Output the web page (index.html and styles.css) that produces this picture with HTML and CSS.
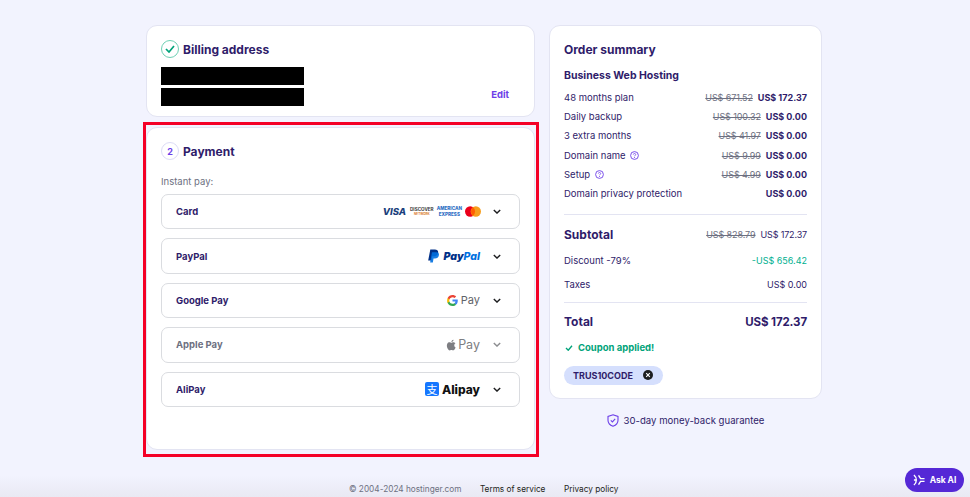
FILE: index.html
```html
<!DOCTYPE html>
<html lang="en">
<head>
  <meta charset="UTF-8">
  <title>Checkout</title>
  <link rel="stylesheet" href="styles.css">
</head>
<body>
  <div class="layout">
    <div class="left-col">
      <section class="card billing">
        <div class="step-title">
          <span class="step step-done">
            <svg width="10" height="8" viewBox="0 0 10 8"><path d="M1 4l3 3 5-6" fill="none" stroke="#00a37a" stroke-width="1.7"/></svg>
          </span>
          <h2>Billing address</h2>
        </div>
        <div class="billing-body">
          <div class="redacted-list">
            <div class="redacted"></div>
            <div class="redacted"></div>
          </div>
          <a class="edit" href="#">Edit</a>
        </div>
      </section>

      <section class="card payment">
        <div class="step-title">
          <span class="step step-num">2</span>
          <h2>Payment</h2>
        </div>
        <div class="instant">Instant pay:</div>
        <div class="methods">
          <div class="method">
            <span class="method-name">Card</span>
            <span class="logo logo-cards">
              <span class="visa">VISA</span>
              <span class="discover">DISCOVER<small>NETWORK</small></span>
              <span class="amex">AMERICAN<br>EXPRESS</span>
              <svg width="16" height="11" viewBox="0 0 17 11"><circle cx="5.5" cy="5.5" r="5.5" fill="#eb001b"/><circle cx="11.5" cy="5.5" r="5.5" fill="#f79e1b"/><path d="M8.5 1.1a5.5 5.5 0 0 1 0 8.8 5.5 5.5 0 0 1 0-8.8z" fill="#ff5f00"/></svg>
            </span>
            <svg class="chevron" width="8" height="5" viewBox="0 0 10 6"><path d="M1 1l4 4 4-4" fill="none" stroke="#1d1e20" stroke-width="1.7"/></svg>
          </div>
          <div class="method">
            <span class="method-name">PayPal</span>
            <span class="logo logo-paypal">
              <svg width="11" height="14" viewBox="0 0 12 14"><path d="M2.5 0h5c2.6 0 4 1.4 3.500 3.600C10.500 6 8.800 7.300 6.300 7.300H4.600L3.800 12H0.200z" fill="#003087"/><path d="M4.300 3h4.700c2.300 0 3.300 1.200 2.900 3.100-.5 2.300-2 3.500-4.300 3.500H6L5.300 14H2.300z" fill="#0070e0" opacity=".9"/></svg>
              <span class="pp-text"><b>Pay</b><i>Pal</i></span>
            </span>
            <svg class="chevron" width="8" height="5" viewBox="0 0 10 6"><path d="M1 1l4 4 4-4" fill="none" stroke="#1d1e20" stroke-width="1.7"/></svg>
          </div>
          <div class="method">
            <span class="method-name">Google Pay</span>
            <span class="logo logo-gpay">
              <svg width="11" height="11" viewBox="0 0 24 24"><path d="M23.500 12.300c0-.9-.1-1.600-.2-2.300H12v4.400h6.500c-.3 1.500-1.100 2.700-2.400 3.500v3h3.800c2.300-2 3.600-5 3.600-8.600z" fill="#4285f4"/><path d="M12 24c3.200 0 6-1.100 7.900-2.900l-3.800-3c-1.100.7-2.400 1.200-4.100 1.200-3.100 0-5.800-2.100-6.700-5H1.400v3.100C3.400 21.300 7.400 24 12 24z" fill="#34a853"/><path d="M5.300 14.300c-.5-1.500-.5-3.100 0-4.600V6.600H1.400c-1.600 3.200-1.600 7.600 0 10.800z" fill="#fbbc04"/><path d="M12 4.700c1.800 0 3.300.6 4.500 1.800l3.400-3.400C17.900 1.200 15.200 0 12 0 7.400 0 3.400 2.700 1.400 6.600l3.900 3.100c.9-2.900 3.600-5 6.700-5z" fill="#ea4335"/></svg>
              <span>Pay</span>
            </span>
            <svg class="chevron" width="8" height="5" viewBox="0 0 10 6"><path d="M1 1l4 4 4-4" fill="none" stroke="#1d1e20" stroke-width="1.7"/></svg>
          </div>
          <div class="method method-off">
            <span class="method-name">Apple Pay</span>
            <span class="logo logo-apay">
              <svg width="10" height="12" viewBox="0 0 17 20"><path d="M14 10.600c0-2.300 1.900-3.400 2-3.500-1.100-1.600-2.800-1.800-3.400-1.800-1.400-.1-2.800.9-3.500.9s-1.900-.9-3-.8C4.500 5.400 3 6.300 2.200 7.700.6 10.500 1.800 14.600 3.300 16.900c.8 1.100 1.700 2.300 2.900 2.300 1.200-.1 1.600-.8 3-.8s1.800.8 3 .7c1.300 0 2-1.100 2.800-2.200.9-1.300 1.200-2.500 1.300-2.600-.1 0-2.300-.9-2.300-3.700zM11.800 3.800C12.400 3 12.900 2 12.700.9c-.9 0-2 .6-2.600 1.400-.6.700-1.100 1.700-1 2.700 1 .1 2-.5 2.700-1.200z" fill="#7d7e82"/></svg>
              <span>Pay</span>
            </span>
            <svg class="chevron" width="8" height="5" viewBox="0 0 10 6"><path d="M1 1l4 4 4-4" fill="none" stroke="#8c8d90" stroke-width="1.7"/></svg>
          </div>
          <div class="method">
            <span class="method-name">AliPay</span>
            <span class="logo logo-alipay">
              <span class="ali-mark">支</span>
              <span>Alipay</span>
            </span>
            <svg class="chevron" width="8" height="5" viewBox="0 0 10 6"><path d="M1 1l4 4 4-4" fill="none" stroke="#1d1e20" stroke-width="1.7"/></svg>
          </div>
        </div>
      </section>
    </div>

    <div class="right-col">
      <aside class="card summary">
        <h2>Order summary</h2>
        <h3>Business Web Hosting</h3>
        <div class="lines">
          <div class="line"><span>48 months plan</span><span class="prices"><s>US$ 671.52</s><b>US$ 172.37</b></span></div>
          <div class="line"><span>Daily backup</span><span class="prices"><s>US$ 100.32</s><b>US$ 0.00</b></span></div>
          <div class="line"><span>3 extra months</span><span class="prices"><s>US$ 41.97</s><b>US$ 0.00</b></span></div>
          <div class="line"><span class="with-help">Domain name <svg width="9" height="9" viewBox="0 0 9 9"><circle cx="4.500" cy="4.500" r="3.900" fill="none" stroke="#6d3fe8" stroke-width=".9"/><path d="M3.300 3.600c0-1.500 2.400-1.500 2.400 0 0 .9-1.200.8-1.200 1.700" fill="none" stroke="#6d3fe8" stroke-width=".8"/><circle cx="4.500" cy="6.600" r=".5" fill="#6d3fe8"/></svg></span><span class="prices"><s>US$ 9.99</s><b>US$ 0.00</b></span></div>
          <div class="line"><span class="with-help">Setup <svg width="9" height="9" viewBox="0 0 9 9"><circle cx="4.500" cy="4.500" r="3.900" fill="none" stroke="#6d3fe8" stroke-width=".9"/><path d="M3.300 3.600c0-1.500 2.400-1.500 2.400 0 0 .9-1.200.8-1.200 1.700" fill="none" stroke="#6d3fe8" stroke-width=".8"/><circle cx="4.500" cy="6.600" r=".5" fill="#6d3fe8"/></svg></span><span class="prices"><s>US$ 4.99</s><b>US$ 0.00</b></span></div>
          <div class="line"><span>Domain privacy protection</span><span class="prices"><b>US$ 0.00</b></span></div>
        </div>
        <hr>
        <div class="subtotal">
          <strong>Subtotal</strong>
          <span class="prices"><s>US$ 828.79</s><span>US$ 172.37</span></span>
        </div>
        <div class="line discount"><span>Discount -79%</span><span class="green">-US$ 656.42</span></div>
        <div class="line taxes"><span>Taxes</span><span class="tax-value">US$ 0.00</span></div>
        <hr class="hr-total">
        <div class="total"><strong>Total</strong><strong class="total-value">US$ 172.37</strong></div>
        <div class="coupon">
          <svg width="8" height="6" viewBox="0 0 10 8"><path d="M1 4l3 3 5-6" fill="none" stroke="#00a37a" stroke-width="1.800"/></svg>
          Coupon applied!
        </div>
        <div class="chip">
          <span>TRUS10CODE</span>
          <svg width="10" height="10" viewBox="0 0 10 10"><circle cx="5" cy="5" r="5" fill="#1d1e20"/><path d="M3.200 3.200l3.600 3.600M6.800 3.200l-3.600 3.600" stroke="#fff" stroke-width="1.100"/></svg>
        </div>
      </aside>
      <div class="guarantee">
        <svg width="12" height="13" viewBox="0 0 12 13"><path d="M6 .8l5 1.700v3.700c0 3-2.200 5-5 6-2.800-1-5-3-5-6V2.500z" fill="none" stroke="#6d3fe8" stroke-width="1.100"/><path d="M3.800 6.300l1.600 1.600 2.800-3" fill="none" stroke="#6d3fe8" stroke-width="1.100"/></svg>
        30-day money-back guarantee
      </div>
    </div>
  </div>

  <footer class="footer">
    <span class="copyright">© 2004-2024 hostinger.com</span>
    <a href="#">Terms of service</a>
    <a href="#">Privacy policy</a>
  </footer>

  <div class="red-frame"></div>

  <button class="ask-ai">
    <svg width="12" height="12" viewBox="0 0 13 13"><path d="M1 1c1.800 1.500 2.600 3.300 2.600 5.500S2.800 10.500 1 12M6 1.500l2.200 3.500H12.500M6 11.500l2.200-3.500H12.500M1 6.500h2.500" fill="none" stroke="#fff" stroke-width="1.500"/></svg>
    Ask AI
  </button>
</body>
</html>
```

FILE: styles.css
```css
/* Page */
body {
  margin: 0;
  height: 497px;
  overflow: hidden;
  position: relative;
  background-color: #f2f3fe;
  font-family: 'Inter', 'Liberation Sans', sans-serif;
  font-size: 9.5px;
  color: #2f1c6a;
}

.layout {
  display: flex;
  gap: 14px;
  padding: 25px 0 0 146px;
}

.left-col {
  width: 389px;
  display: flex;
  flex-direction: column;
  gap: 10px;
}

.right-col {
  width: 273px;
}

.card {
  background-color: #ffffff;
  border: 1px solid #e3e4f2;
  border-radius: 11px;
  box-sizing: border-box;
}

h2 {
  margin: 0 0 -1px;
  padding-top: 1px;
  font-size: 12px;
  line-height: 18px;
  font-weight: 700;
  color: #2f1c6a;
}

/* Billing and payment */
.billing {
  height: 92px;
  padding: 14px 14px 0 14px;
}

.payment {
  height: 323px;
  padding: 14px 14px 0 14px;
}

.step-title {
  display: flex;
  align-items: center;
  gap: 4px;
}

.step {
  width: 18px;
  height: 18px;
  border-radius: 50%;
  box-sizing: border-box;
  display: flex;
  align-items: center;
  justify-content: center;
}

.step-done {
  border: 1px solid #6fd0b4;
}

.step-num {
  border: 1px solid #dcdcf5;
  color: #6d3fe8;
  font-size: 9px;
  font-weight: 700;
}

.billing-body {
  display: flex;
  justify-content: space-between;
  align-items: flex-end;
  margin-top: 9px;
}

.redacted-list {
  display: flex;
  flex-direction: column;
  gap: 3px;
}

.redacted {
  width: 143px;
  height: 18px;
  background-color: #000000;
}

.edit {
  margin: 0 11px 6px 0;
  color: #6d3fe8;
  font-size: 9.5px;
  font-weight: 700;
  text-decoration: none;
}

.instant {
  margin-top: 16px;
  line-height: 12px;
  color: #6d7081;
  font-size: 9.5px;
}

.methods {
  display: flex;
  flex-direction: column;
  gap: 9px;
  margin-top: 6px;
}

.method {
  height: 35.4px;
  box-sizing: border-box;
  display: flex;
  align-items: center;
  padding: 0 18px 0 14px;
  border: 1px solid #dadce0;
  border-radius: 7px;
}

.method-name {
  font-size: 9.5px;
  font-weight: 700;
  flex: 1;
}

.method-off .method-name {
  color: #6d7081;
}

.chevron {
  margin-left: 12px;
}

.logo {
  display: flex;
  align-items: center;
  margin-right: 1px;
}

/* Card logos */
.logo-cards {
  gap: 3px;
  margin-right: 0;
}

.visa {
  margin-right: 1px;
  color: #1a3f7c;
  font-size: 9.5px;
  font-weight: 800;
  font-style: italic;
}

.discover {
  color: #3a3a3a;
  font-size: 4.6px;
  font-weight: 700;
  line-height: 5px;
  display: flex;
  flex-direction: column;
  align-items: center;
}

.discover small {
  font-size: 3px;
  color: #d9772c;
}

.amex {
  color: #2f6fc4;
  font-size: 4.6px;
  font-weight: 800;
  line-height: 5.5px;
  text-align: center;
}

.logo-paypal {
  gap: 5px;
}

.pp-text {
  font-size: 10.5px;
  font-weight: 800;
  font-style: italic;
}

.pp-text b {
  color: #003087;
}

.pp-text i {
  color: #0070e0;
}

.logo-gpay,
.logo-apay {
  gap: 3px;
  color: #5f6368;
  font-size: 11px;
  line-height: 14px;
}

.logo-apay {
  gap: 2px;
  color: #7d7e82;
  font-size: 12.5px;
}

.logo-alipay {
  gap: 3px;
  color: #111111;
  font-size: 12px;
  font-weight: 800;
}

.ali-mark {
  width: 14px;
  height: 14px;
  border-radius: 2px;
  background-color: #1677ff;
  color: #ffffff;
  font-family: 'Noto Sans CJK SC', sans-serif;
  font-size: 11px;
  font-weight: 400;
  line-height: 14px;
  text-align: center;
}

/* Order summary */
.summary {
  height: 374px;
  padding: 14px 14px 0 14px;
}

h3 {
  margin: 10px 0 0;
  font-size: 10.5px;
  line-height: 15px;
  font-weight: 700;
}

.lines {
  margin-top: 5px;
  display: flex;
  flex-direction: column;
}

.line {
  display: flex;
  justify-content: space-between;
  align-items: center;
  height: 19.2px;
}

.prices {
  display: flex;
  gap: 5px;
  font-size: 9px;
}

.prices s {
  color: #6d7081;
  letter-spacing: -0.1px;
}

.with-help svg {
  margin-left: 2px;
  vertical-align: -1px;
}

hr {
  border: none;
  border-top: 1px solid #e3e4f2;
  margin: 11px 0 0;
}

.subtotal,
.total {
  display: flex;
  justify-content: space-between;
  align-items: center;
  height: 18px;
  margin-top: 10px;
}

.subtotal strong,
.total strong {
  font-size: 12px;
}

.subtotal .prices span {
  letter-spacing: -0.15px;
}

.total .total-value {
  font-size: 11.5px;
  letter-spacing: -0.1px;
}

.discount {
  margin-top: 8px;
}

.taxes {
  margin-top: 5px;
}

.green,
.tax-value {
  font-size: 9px;
}

.green {
  color: #00b090;
}

.hr-total {
  margin-top: 7px;
}

.coupon {
  display: flex;
  align-items: center;
  gap: 5px;
  margin-top: 10px;
  height: 14px;
  padding-left: 1px;
  color: #00a37a;
  font-weight: 700;
}

.chip {
  display: inline-flex;
  align-items: center;
  gap: 10px;
  height: 19px;
  margin-top: 11px;
  padding: 0 10px 0 9px;
  border-radius: 10px;
  background-color: #d5dffd;
  font-size: 9px;
  font-weight: 700;
}

.guarantee {
  display: flex;
  align-items: center;
  justify-content: center;
  gap: 5px;
  margin-top: 15px;
  font-size: 9.6px;
}

/* Footer */
.footer {
  position: absolute;
  left: 0;
  right: 0;
  bottom: 0;
  height: 22px;
  box-sizing: border-box;
  padding: 8px 0 0 349px;
  display: flex;
  gap: 18.5px;
  font-size: 8.25px;
  line-height: 12px;
  background: linear-gradient(#f2f3fe, #e9e9f3);
}

.footer a {
  color: #1d1e20;
  text-decoration: none;
}

.copyright {
  color: #6d7081;
}

/* Red annotation over the payment card */
.red-frame {
  position: absolute;
  left: 143px;
  top: 122px;
  width: 390px;
  height: 329px;
  border: 3px solid #f40026;
}

.ask-ai {
  position: absolute;
  left: 905px;
  top: 468px;
  width: 59px;
  height: 24px;
  border: none;
  border-radius: 12px;
  padding: 0;
  display: flex;
  align-items: center;
  justify-content: center;
  gap: 5px;
  background-color: #5528d6;
  color: #ffffff;
  font-family: 'Inter', sans-serif;
  font-size: 8.5px;
  font-weight: 700;
}
```
